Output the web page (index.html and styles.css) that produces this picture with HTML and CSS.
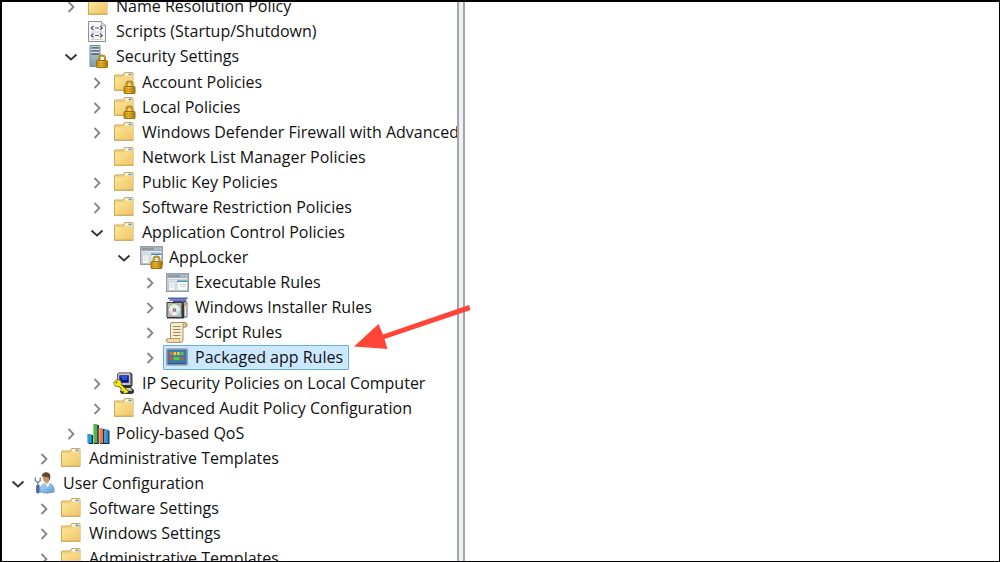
FILE: index.html
```
<!DOCTYPE html>
<html lang="en">
    <head>
        <meta charset="UTF-8" />
        <meta name="viewport" content="width=device-width, initial-scale=1.0" />
        <title>Local Group Policy Editor</title>

        <link rel="stylesheet" href="styles.css">
    </head>
    <body>
        <svg class="sprite" aria-hidden="true">
            <defs>
                <linearGradient id="gold" x1="0" y1="0" x2="1" y2="1">
                    <stop offset="0" stop-color="#ffe797" />
                    <stop offset="1" stop-color="#ecc468" />
                </linearGradient>
                <linearGradient id="brass" x1="0" y1="0" x2="1" y2="0">
                    <stop offset="0" stop-color="#c98d10" />
                    <stop offset="0.4" stop-color="#f2c437" />
                    <stop offset="1" stop-color="#a8720c" />
                </linearGradient>
                <linearGradient id="steel" x1="0" y1="0" x2="0" y2="1">
                    <stop offset="0" stop-color="#c6d2dc" />
                    <stop offset="1" stop-color="#7e98ad" />
                </linearGradient>
                <linearGradient id="shirt" x1="0" y1="0" x2="1" y2="1">
                    <stop offset="0" stop-color="#b4dcf8" />
                    <stop offset="1" stop-color="#5b9bd0" />
                </linearGradient>
            </defs>
            <symbol id="chevron-right" viewBox="0 0 16 16">
                <path d="M5.5 3l5 5-5 5" fill="none" stroke="#858585" stroke-width="1.8" />
            </symbol>
            <symbol id="chevron-down" viewBox="0 0 16 16">
                <path d="M2.5 5.5l5.5 5 5.5-5" fill="none" stroke="#333" stroke-width="1.8" />
            </symbol>
            <symbol id="lock" viewBox="0 0 12 14">
                <path d="M3 7V4.5a3 3 0 0 1 6 0V7" fill="none" stroke="#a8780f" stroke-width="2" />
                <path d="M3 7V4.5a3 3 0 0 1 6 0V7" fill="none" stroke="#e2b643" stroke-width="0.7" />
                <rect x="0.5" y="6.5" width="11" height="7" rx="0.8" fill="url(#brass)" stroke="#9a6b0b" />
                <path d="M1.5 9h9M1.5 11.3h9" stroke="#b5800f" stroke-width="0.8" />
            </symbol>
            <symbol id="folder" viewBox="0 0 24 24">
                <path d="M1.5 19V4.6q0-.6.6-.6h8.2l1.4-2.5h7.6q.7 0 .7.7V19z" fill="#f0d080" stroke="#cfa955" />
                <path d="M12.5 2.3h6.7v2.2h-7.5z" fill="#fff" />
                <path d="M15.5 2.6h3v1.6h-3z" fill="#3e9ae0" />
                <path d="M2 6.5h9l1.5-1.3H20V19H2z" fill="url(#gold)" />
                <path d="M1 19.2h19.5" stroke="#c69f4a" />
            </symbol>
            <symbol id="folder-lock" viewBox="0 0 24 24">
                <use href="#folder" width="24" height="24" />
                <use href="#lock" x="10" y="9" width="13" height="14" />
            </symbol>
            <symbol id="script-page" viewBox="0 0 24 24">
                <path d="M1.5 1.5h13l4 4v16h-17z" fill="#f7f7f7" stroke="#8d8d8d" />
                <path d="M14.5 1.5v4h4" fill="#dcdcdc" stroke="#999" stroke-width="0.8" />
                <path d="M6.5 6L4.3 8l2.2 2M13 6l2.2 2L13 10M8 8h4M6.5 13.5L4.3 15.5l2.2 2M13 13.5l2.2 2-2.2 2M8 15.5h4" fill="none" stroke="#4f4868" stroke-width="1.2" />
                <path d="M4 12h12M4 19.5h12" stroke="#c2c2c2" stroke-width="0.8" />
            </symbol>
            <symbol id="server-lock" viewBox="0 0 24 24">
                <path d="M3 .5h10v21H3z" fill="url(#steel)" stroke="#7b8b98" />
                <path d="M4.5 3h7.5M4.5 6h7.5M4.5 9h7.5" stroke="#425b6e" stroke-width="1.3" />
                <path d="M4.5 4.3h7.5M4.5 7.3h7.5" stroke="#eef4f8" />
                <path d="M9.5 11.5h1.8" stroke="#7fe060" stroke-width="1.5" />
                <use href="#lock" x="8.5" y="9" width="13" height="14" />
            </symbol>
            <symbol id="window" viewBox="0 0 24 24">
                <rect x="0.7" y="2.7" width="21.6" height="17.6" fill="#e9eef1" stroke="#949ca6" stroke-width="1.4" />
                <path d="M1.4 3.4h20.2v3.4H1.4z" fill="#8e99a8" />
                <path d="M14.5 5h1.5M17 5h1.5M19.5 5H21" stroke="#fff" stroke-width="1.2" />
                <path d="M2 8.5h19.5" stroke="#c9d0d6" />
                <path d="M2.5 10.3h6.5v9H2.5zM11 10.3h10.5v9H11z" fill="#fff" stroke="#a9b4bd" stroke-width="0.7" />
                <path d="M3.5 12h4M3.5 14h4M3.5 16h4M14 13.5h6M14 15.5h6" stroke="#b7c6d0" stroke-width="0.8" />
                <path d="M11 10.2h10.5" stroke="#3288b8" stroke-width="1.4" />
            </symbol>
            <symbol id="window-lock" viewBox="0 0 24 24">
                <use href="#window" y="-2" width="24" height="24" />
                <use href="#lock" x="10" y="9" width="13" height="14" />
            </symbol>
            <symbol id="installer" viewBox="0 0 24 24">
                <path d="M7 4.5h13v17H7z" fill="#4a5692" />
                <path d="M2 2.2h19.5M3.5 4h17" stroke="#5360a5" stroke-width="1.5" />
                <path d="M18 6h3v15h-3z" fill="#f4eed5" stroke="#444d7b" stroke-width="0.8" />
                <path d="M19.5 7v3" stroke="#d79c22" stroke-width="1.5" />
                <path d="M1 6.5h15l2 2v14H1z" fill="#343434" />
                <path d="M1 6.5h15v15H1z" fill="#b9bbb9" stroke="#333" />
                <circle cx="8.5" cy="14" r="6.3" fill="#eceeed" stroke="#777" stroke-width="0.6" />
                <path d="M8.5 14L3.6 10.3A6 6 0 0 1 6.7 8.2z" fill="#d8f3bf" />
                <path d="M8.5 14l5.8 1.5a6 6 0 0 1-3 3.8z" fill="#bfe4f3" />
                <path d="M8.5 14l-5.7 1.7a6 6 0 0 0 2.4 3.2z" fill="#efc8df" />
                <circle cx="8.5" cy="14" r="1.7" fill="#5a5a5a" />
                <circle cx="8.5" cy="14" r="0.7" fill="#fff" />
            </symbol>
            <symbol id="scroll" viewBox="0 0 24 24">
                <path d="M5.5 1.5h13q2.5 0 2.5 2.5t-2.5 2H17v13q0 2.5-2.5 2.5h-12q-2 0-2-2t2-2h2V4q0-2.5 2-2.5z" fill="#f8edca" stroke="#a58f61" />
                <path d="M17 6V3.5q0-2 2-2 2 .3 2 2.5 0 2-2.5 2z" fill="#dcc68c" stroke="#a58f61" stroke-width="0.8" />
                <path d="M2.5 17.5H14q-1 2.2.5 4h-12q-2 0-2-2t2-2z" fill="#eddba9" stroke="#a58f61" stroke-width="0.8" />
                <path d="M7 5.5h7.5M7 8.5h7.5M7 11.5h7.5M7 14.5h7.5" stroke="#998a69" stroke-width="1.1" />
            </symbol>
            <symbol id="package" viewBox="0 0 24 24">
                <rect x="0.8" y="3" width="20.5" height="16" rx="0.8" fill="#3679ad" stroke="#9aa3aa" stroke-width="1.5" />
                <path d="M2 17.6h18" stroke="#235a86" />
                <path d="M3.5 6h3v3.2h-3z" fill="#f06a28" />
                <path d="M7.5 6h2.7v3.2H7.500zM11.200 6h2.500v3.200h-2.500z" fill="#f7c92b" />
                <path d="M14.700 6h2.700v3.200h-2.700zM7.500 11h6v3.200h-6z" fill="#58cf3e" />
                <path d="M3.500 11h3v3.200h-3zM14.700 11h2.700v3.200h-2.700z" fill="#ee4a2a" />
            </symbol>
            <symbol id="ip-security" viewBox="0 0 24 24">
                <path d="M4 2l2-1.5h12l1.500 2v11l-1.500 2L21 18v2.500l-2 1.500H9l-2-2 1-4-4-2z" fill="#333" />
                <path d="M4.700 2.200l1.600-1H17V13H4.700z" fill="#c4c4c4" />
                <path d="M17 1.200l1.500 1.600v10L17 14z" fill="#777" />
                <path d="M6.300 3.300h9.500v7.500H6.300z" fill="#0d148c" />
                <path d="M7.500 5h7M9 7h5" stroke="#3568e8" stroke-width="1.300" />
                <path d="M9.500 16h8l2 2.800H12z" fill="#cfcfcf" />
                <path d="M4 10.500l10.500 10" stroke="#554d00" stroke-width="3.600" />
                <path d="M0.700 10.200l2.500-2.400 4.300.4 1 3.300-2.700 3.200-3.800-.5z" fill="#f4e823" stroke="#6a6205" stroke-width="0.700" />
                <path d="M4 10.500l10.500 10M10.500 16.800l-2 2M12.700 19l-1.700 2" stroke="#f7e91e" stroke-width="2.400" />
                <circle cx="3.500" cy="10.400" r="0.900" fill="#5d5708" />
            </symbol>
            <symbol id="qos" viewBox="0 0 24 24">
                <path d="M1.500 13h5v9h-5zM7 3h5v19H7zM13 7h5v15h-5zM18 8.500h4.500V22H18z" fill="#183142" />
                <path d="M0 12h4.500v9H0z" fill="#269be0" />
                <path d="M6 2h4.300v19H6z" fill="#55b548" />
                <path d="M11.700 6.200H16V21h-4.300z" fill="#f17750" />
                <path d="M17.300 7.500h4V21h-4z" fill="#238ed5" />
                <path d="M0.500 12.500v8M6.600 2.500v18M12.300 6.700v14M17.900 8v12.500" stroke="#fff" stroke-opacity="0.400" />
            </symbol>
            <symbol id="user" viewBox="0 0 24 24">
                <path d="M6 20q-.5-8 6-8.500h4q4 1 4.200 8.500-7 2.300-14.200 0z" fill="url(#shirt)" stroke="#5d8eb8" stroke-width="0.700" />
                <path d="M11 11.300l2.500 4 2.800-4z" fill="#f5faff" />
                <path d="M8.300 4.500q0-3.700 3.700-3.700 4 0 4 4.500-.2 5-3.200 6.200-3.800-1.500-4.500-7z" fill="#c99568" />
                <path d="M7.800 4Q8.500.2 12.300.3q4.500.2 4 5.200l-1 3-.8-3.500q-3 .5-6.700-1z" fill="#5c4634" />
                <path d="M1.300 5.500v3l2.500 2 2.500-2v-3M3.800 10v4" fill="none" stroke="#8793a0" stroke-width="1.600" />
                <path d="M2.500 13.500h2.800v7q-1.400 1.300-2.800 0z" fill="#456fae" stroke="#35588f" stroke-width="0.600" />
            </symbol>
        </svg>

        <nav class="tree-pane" aria-label="Console tree">
            <ul class="tree">
                <li>
                    <ul class="indent">
                        <li>
                            <ul class="indent-wide">
                                <li>
                                    <div class="row">
                                        <button class="toggle" aria-label="Expand"><svg><use href="#chevron-right" /></svg></button>
                                        <span class="node"><svg class="icon"><use href="#folder" /></svg>Name Resolution Policy</span>
                                    </div>
                                </li>
                                <li>
                                    <div class="row leaf">
                                        <span class="node"><svg class="icon"><use href="#script-page" /></svg>Scripts (Startup/Shutdown)</span>
                                    </div>
                                </li>
                                <li>
                                    <div class="row">
                                        <button class="toggle" aria-label="Collapse"><svg><use href="#chevron-down" /></svg></button>
                                        <span class="node"><svg class="icon"><use href="#server-lock" /></svg>Security Settings</span>
                                    </div>
                                    <ul class="indent spaced">
                                        <li>
                                            <div class="row">
                                                <button class="toggle" aria-label="Expand"><svg><use href="#chevron-right" /></svg></button>
                                                <span class="node"><svg class="icon"><use href="#folder-lock" /></svg>Account Policies</span>
                                            </div>
                                        </li>
                                        <li>
                                            <div class="row">
                                                <button class="toggle" aria-label="Expand"><svg><use href="#chevron-right" /></svg></button>
                                                <span class="node"><svg class="icon"><use href="#folder-lock" /></svg>Local Policies</span>
                                            </div>
                                        </li>
                                        <li>
                                            <div class="row">
                                                <button class="toggle" aria-label="Expand"><svg><use href="#chevron-right" /></svg></button>
                                                <span class="node"><svg class="icon"><use href="#folder" /></svg>Windows Defender Firewall with Advanced Security</span>
                                            </div>
                                        </li>
                                        <li>
                                            <div class="row leaf">
                                                <span class="node"><svg class="icon"><use href="#folder" /></svg>Network List Manager Policies</span>
                                            </div>
                                        </li>
                                        <li>
                                            <div class="row">
                                                <button class="toggle" aria-label="Expand"><svg><use href="#chevron-right" /></svg></button>
                                                <span class="node"><svg class="icon"><use href="#folder" /></svg>Public Key Policies</span>
                                            </div>
                                        </li>
                                        <li>
                                            <div class="row">
                                                <button class="toggle" aria-label="Expand"><svg><use href="#chevron-right" /></svg></button>
                                                <span class="node"><svg class="icon"><use href="#folder" /></svg>Software Restriction Policies</span>
                                            </div>
                                        </li>
                                        <li>
                                            <div class="row">
                                                <button class="toggle" aria-label="Collapse"><svg><use href="#chevron-down" /></svg></button>
                                                <span class="node"><svg class="icon"><use href="#folder" /></svg>Application Control Policies</span>
                                            </div>
                                            <ul class="indent-wide">
                                                <li>
                                                    <div class="row">
                                                        <button class="toggle" aria-label="Collapse"><svg><use href="#chevron-down" /></svg></button>
                                                        <span class="node"><svg class="icon"><use href="#window-lock" /></svg>AppLocker</span>
                                                    </div>
                                                    <ul class="indent spaced-after">
                                                        <li>
                                                            <div class="row">
                                                                <button class="toggle" aria-label="Expand"><svg><use href="#chevron-right" /></svg></button>
                                                                <span class="node"><svg class="icon"><use href="#window" /></svg>Executable Rules</span>
                                                            </div>
                                                        </li>
                                                        <li>
                                                            <div class="row">
                                                                <button class="toggle" aria-label="Expand"><svg><use href="#chevron-right" /></svg></button>
                                                                <span class="node"><svg class="icon"><use href="#installer" /></svg>Windows Installer Rules</span>
                                                            </div>
                                                        </li>
                                                        <li>
                                                            <div class="row">
                                                                <button class="toggle" aria-label="Expand"><svg><use href="#chevron-right" /></svg></button>
                                                                <span class="node"><svg class="icon"><use href="#scroll" /></svg>Script Rules</span>
                                                            </div>
                                                        </li>
                                                        <li>
                                                            <div class="row">
                                                                <button class="toggle" aria-label="Expand"><svg><use href="#chevron-right" /></svg></button>
                                                                <span class="node selected"><svg class="icon"><use href="#package" /></svg>Packaged app Rules</span>
                                                            </div>
                                                        </li>
                                                    </ul>
                                                </li>
                                            </ul>
                                        </li>
                                        <li>
                                            <div class="row">
                                                <button class="toggle" aria-label="Expand"><svg><use href="#chevron-right" /></svg></button>
                                                <span class="node"><svg class="icon"><use href="#ip-security" /></svg>IP Security Policies on Local Computer</span>
                                            </div>
                                        </li>
                                        <li>
                                            <div class="row">
                                                <button class="toggle" aria-label="Expand"><svg><use href="#chevron-right" /></svg></button>
                                                <span class="node"><svg class="icon"><use href="#folder" /></svg>Advanced Audit Policy Configuration</span>
                                            </div>
                                        </li>
                                    </ul>
                                </li>
                                <li>
                                    <div class="row">
                                        <button class="toggle" aria-label="Expand"><svg><use href="#chevron-right" /></svg></button>
                                        <span class="node"><svg class="icon"><use href="#qos" /></svg>Policy-based QoS</span>
                                    </div>
                                </li>
                            </ul>
                        </li>
                        <li>
                            <div class="row">
                                <button class="toggle" aria-label="Expand"><svg><use href="#chevron-right" /></svg></button>
                                <span class="node"><svg class="icon"><use href="#folder" /></svg>Administrative Templates</span>
                            </div>
                        </li>
                    </ul>
                </li>
                <li>
                    <div class="row">
                        <button class="toggle" aria-label="Collapse"><svg><use href="#chevron-down" /></svg></button>
                        <span class="node"><svg class="icon"><use href="#user" /></svg>User Configuration</span>
                    </div>
                    <ul class="indent">
                        <li>
                            <div class="row">
                                <button class="toggle" aria-label="Expand"><svg><use href="#chevron-right" /></svg></button>
                                <span class="node"><svg class="icon"><use href="#folder" /></svg>Software Settings</span>
                            </div>
                        </li>
                        <li>
                            <div class="row">
                                <button class="toggle" aria-label="Expand"><svg><use href="#chevron-right" /></svg></button>
                                <span class="node"><svg class="icon"><use href="#folder" /></svg>Windows Settings</span>
                            </div>
                        </li>
                        <li>
                            <div class="row">
                                <button class="toggle" aria-label="Expand"><svg><use href="#chevron-right" /></svg></button>
                                <span class="node"><svg class="icon"><use href="#folder" /></svg>Administrative Templates</span>
                            </div>
                        </li>
                    </ul>
                </li>
            </ul>
        </nav>
        <div class="splitter"></div>
        <main class="details"></main>

        <svg class="arrow" viewBox="0 0 120 48" aria-hidden="true">
            <path d="M3 45.500L27.500 23l4.500 10.500L118 4l1.500 5L33.500 38 36.500 48z" fill="#ff4438" />
        </svg>
    </body>
</html>
```
FILE: styles.css
```
* {
    box-sizing: border-box;
}
body {
    position: relative;
    margin: 0;
    height: 100vh;
    display: grid;
    grid-template-columns: 46fr 8px 54fr;
    overflow: hidden;
    background-color: #fff;
    border: solid #000;
    border-width: 2px 1px 1px 2px;
    font-family: "Open Sans", "Segoe UI", sans-serif;
    font-size: 16px;
    line-height: 23px;
    color: #111;
}
ul {
    list-style: none;
    margin: 0;
    padding: 0;
}
.sprite {
    position: absolute;
    width: 0;
    height: 0;
}
.tree-pane {
    min-width: 0;
    overflow: hidden;
}
/* scrolled down, the first row is partly cut off */
.tree {
    margin-top: -8px;
    padding-left: 8px;
}
.indent {
    padding-left: 26px;
}
.indent-wide {
    padding-left: 27px;
}
.spaced {
    padding-top: 1px;
}
.spaced-after {
    padding-bottom: 1px;
}
.row {
    display: flex;
    align-items: center;
    gap: 5px;
    height: 25px;
}
.leaf {
    padding-left: 21px;
}
.toggle {
    flex: none;
    width: 16px;
    height: 16px;
    padding: 0;
    border: none;
    background: transparent;
}
.toggle svg {
    display: block;
    width: 16px;
    height: 16px;
}
.node {
    display: flex;
    align-items: center;
    gap: 5px;
    height: 25px;
    padding: 0 5px 0 2px;
    border: 1px solid transparent;
    white-space: nowrap;
}
.selected {
    background-color: #cce8ff;
    border-color: #66aee6;
    border-radius: 1px;
}
.icon {
    flex: none;
    width: 24px;
    height: 24px;
}
.splitter {
    background-color: #f0f0f0;
    border: solid #a0a5ae;
    border-width: 0 2px;
    cursor: col-resize;
}
.details {
    min-width: 0;
}
.arrow {
    position: absolute;
    top: 299px;
    left: 349px;
    width: 120px;
    height: 48px;
}
```
